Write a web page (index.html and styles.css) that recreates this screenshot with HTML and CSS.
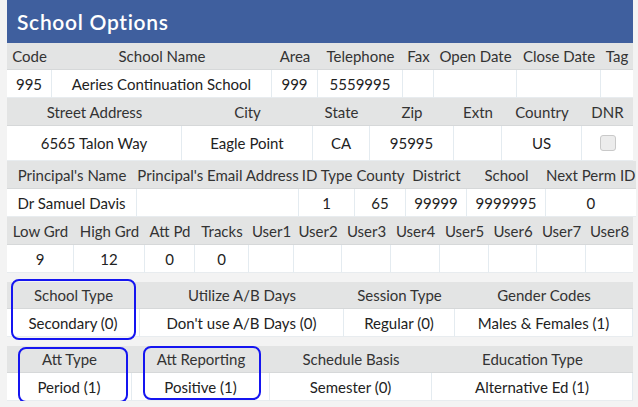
FILE: index.html
```html
<!DOCTYPE html>
<html>
<head>
<meta charset="utf-8">
<link rel="stylesheet" href="styles.css">
</head>
<body>
<div class="panel">
  <div class="title">School Options</div>

  <div class="grid g1">
    <div class="h">Code</div><div class="h">School Name</div><div class="h">Area</div><div class="h">Telephone</div><div class="h">Fax</div><div class="h">Open Date</div><div class="h">Close Date</div><div class="h">Tag</div>
    <div class="d">995</div><div class="d">Aeries Continuation School</div><div class="d">999</div><div class="d">5559995</div><div class="d"></div><div class="d"></div><div class="d"></div><div class="d"></div>
  </div>

  <div class="grid g2">
    <div class="h">Street Address</div><div class="h">City</div><div class="h">State</div><div class="h">Zip</div><div class="h">Extn</div><div class="h">Country</div><div class="h">DNR</div>
    <div class="d tall">6565 Talon Way</div><div class="d tall">Eagle Point</div><div class="d tall">CA</div><div class="d tall">95995</div><div class="d tall"></div><div class="d tall">US</div><div class="d tall"><span class="check"></span></div>
  </div>

  <div class="grid g3">
    <div class="h">Principal's Name</div><div class="h">Principal's Email Address</div><div class="h">ID Type</div><div class="h">County</div><div class="h">District</div><div class="h">School</div><div class="h">Next Perm ID</div>
    <div class="d">Dr Samuel Davis</div><div class="d"></div><div class="d">1</div><div class="d">65</div><div class="d">99999</div><div class="d">9999995</div><div class="d">0</div>
  </div>

  <div class="grid g4">
    <div class="h">Low Grd</div><div class="h">High Grd</div><div class="h">Att Pd</div><div class="h">Tracks</div><div class="h">User1</div><div class="h">User2</div><div class="h">User3</div><div class="h">User4</div><div class="h">User5</div><div class="h">User6</div><div class="h">User7</div><div class="h">User8</div>
    <div class="d">9</div><div class="d">12</div><div class="d">0</div><div class="d">0</div><div class="d"></div><div class="d"></div><div class="d"></div><div class="d"></div><div class="d"></div><div class="d"></div><div class="d"></div><div class="d"></div>
  </div>

  <div class="grid g5 sep">
    <div class="h">School Type</div><div class="h">Utilize A/B Days</div><div class="h">Session Type</div><div class="h">Gender Codes</div>
    <div class="d">Secondary (0)</div><div class="d">Don't use A/B Days (0)</div><div class="d">Regular (0)</div><div class="d">Males &amp; Females (1)</div>
    <div class="mark m-school"></div>
  </div>

  <div class="grid g6 sep">
    <div class="h">Att Type</div><div class="h">Att Reporting</div><div class="h">Schedule Basis</div><div class="h">Education Type</div>
    <div class="d">Period (1)</div><div class="d">Positive (1)</div><div class="d">Semester (0)</div><div class="d">Alternative Ed (1)</div>
    <div class="mark m-atttype"></div>
    <div class="mark m-attrep"></div>
  </div>
</div>
</body>
</html>
```

FILE: styles.css
```css
html, body {
  margin: 0;
  padding: 0;
  background: #f3f3f3;
}
body {
  font-family: Lato, "Noto Sans", Arial, sans-serif;
  font-size: 15px;
  color: #222;
}
.panel {
  margin-left: 7px;
  width: 626px;
}
.title {
  height: 43px;
  background: #3f5f9e;
  color: #fff;
  font-size: 21px;
  font-weight: 600;
  letter-spacing: 0.7px;
  line-height: 43px;
  padding-left: 10px;
  box-sizing: border-box;
}
.grid {
  display: grid;
  position: relative;
}
.sep {
  margin-top: 9px;
}
.h {
  background: #e3e4e4;
  color: #333;
  height: 28px;
  box-sizing: border-box;
  border-bottom: 1px solid #d6d8d9;
  display: flex;
  align-items: center;
  justify-content: center;
  white-space: nowrap;
}
.g1 .h, .g5 .h, .g6 .h { height: 27px; }
.d {
  background: #fff;
  height: 28px;
  box-sizing: border-box;
  border-right: 1px solid #e4ebf0;
  border-bottom: 1px solid #e8ecef;
  display: flex;
  align-items: center;
  justify-content: center;
  white-space: nowrap;
}
.d:last-of-type { border-right: none; }
.d.tall { height: 35px; }
.g1 { grid-template-columns: 45px 220px 46px 85px 31px 83px 84px 1fr; }
.g2 { grid-template-columns: 175px 131px 57px 84px 48px 80px 1fr; }
.g3 { grid-template-columns: 130px 162px 56px 51px 61px 79px 1fr; }
.g4 { grid-template-columns: 67px 71px 50px 54px 45px 48px 49px 49px 49px 48px 49px 1fr; }
.g5 { grid-template-columns: 133px 204px 111px 1fr; }
.g6 { grid-template-columns: 125px 138px 162px 1fr; }
.check {
  width: 16px;
  height: 16px;
  box-sizing: border-box;
  border: 1px solid #c9c9c9;
  border-radius: 3px;
  background: #ececec;
}
.mark {
  position: absolute;
  box-sizing: border-box;
  border: 2px solid #1515f0;
  border-radius: 8px;
}
.m-school { left: 4px; top: -3px; width: 125px; height: 61px; }
.m-atttype { left: 11px; top: 1px; width: 110px; height: 56px; }
.m-attrep { left: 136px; top: 0; width: 118px; height: 54px; }
```
